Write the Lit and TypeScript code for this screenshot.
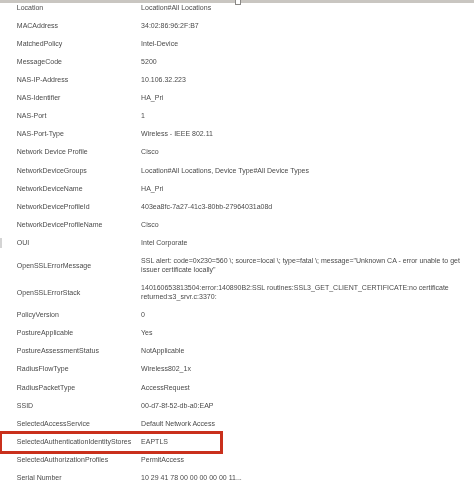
import { LitElement, html, css } from "lit";
import { customElement } from "lit/decorators.js";

const rows: [string, string, number?][] = [
  ["Location", "Location#All Locations"],
  ["MACAddress", "34:02:86:96:2F:B7"],
  ["MatchedPolicy", "Intel-Device"],
  ["MessageCode", "5200"],
  ["NAS-IP-Address", "10.106.32.223"],
  ["NAS-Identifier", "HA_Pri"],
  ["NAS-Port", "1"],
  ["NAS-Port-Type", "Wireless - IEEE 802.11"],
  ["Network Device Profile", "Cisco"],
  ["NetworkDeviceGroups", "Location#All Locations, Device Type#All Device Types"],
  ["NetworkDeviceName", "HA_Pri"],
  ["NetworkDeviceProfileId", "403ea8fc-7a27-41c3-80bb-27964031a08d"],
  ["NetworkDeviceProfileName", "Cisco"],
  ["OUI", "Intel Corporate"],
  ["OpenSSLErrorMessage", 'SSL alert: code=0x230=560 \\; source=local \\; type=fatal \\; message="Unknown CA - error unable to get issuer certificate locally"', 2],
  ["OpenSSLErrorStack", "140160653813504:error:140890B2:SSL routines:SSL3_GET_CLIENT_CERTIFICATE:no certificate returned:s3_srvr.c:3370:", 2],
  ["PolicyVersion", "0"],
  ["PostureApplicable", "Yes"],
  ["PostureAssessmentStatus", "NotApplicable"],
  ["RadiusFlowType", "Wireless802_1x"],
  ["RadiusPacketType", "AccessRequest"],
  ["SSID", "00-d7-8f-52-db-a0:EAP"],
  ["SelectedAccessService", "Default Network Access"],
  ["SelectedAuthenticationIdentityStores", "EAPTLS"],
  ["SelectedAuthorizationProfiles", "PermitAccess"],
  ["Serial Number", "10 29 41 78 00 00 00 00 00 11..."],
];

@customElement("app-root")
export class AppRoot extends LitElement {
  static styles = css`
    :host { display: block; width: 474px; height: 481px; overflow: hidden; background: #fff; position: relative; }
    .top { position: absolute; left: 0; top: 0; width: 100%; height: 3px; background: #c9c6c1; }
    .handle { position: absolute; left: 235px; top: 0; width: 6px; height: 5px; box-sizing: border-box; background: #fff; border: 1px solid #8a8885; border-top: none; }
    .tick { position: absolute; left: 0; top: 238px; width: 2px; height: 10px; background: #d4d4d4; }
    .list { filter: blur(0.4px); font: 7px "Liberation Sans", Arial, sans-serif; color: #4a4a4a; margin-top: -2px; }
    .row { display: grid; grid-template-columns: 124.3px 1fr; padding-left: 16.8px; padding-right: 8px; height: 18.12px; align-items: center; }
    .row.two { height: 27px; line-height: 9px; }
    .box { position: absolute; left: -1px; top: 431px; width: 224px; height: 23px; box-sizing: border-box; border: 3px solid #c9301c; filter: blur(0.3px); }
  `;
  render() {
    return html`
      <div class="list">
        ${rows.map(
          ([k, v, n]) => html`<div class="row ${n === 2 ? "two" : ""}"><span>${k}</span><span>${v}</span></div>`
        )}
      </div>
      <div class="top"></div>
      <div class="handle"></div>
      <div class="tick"></div>
      <div class="box"></div>
    `;
  }
}
